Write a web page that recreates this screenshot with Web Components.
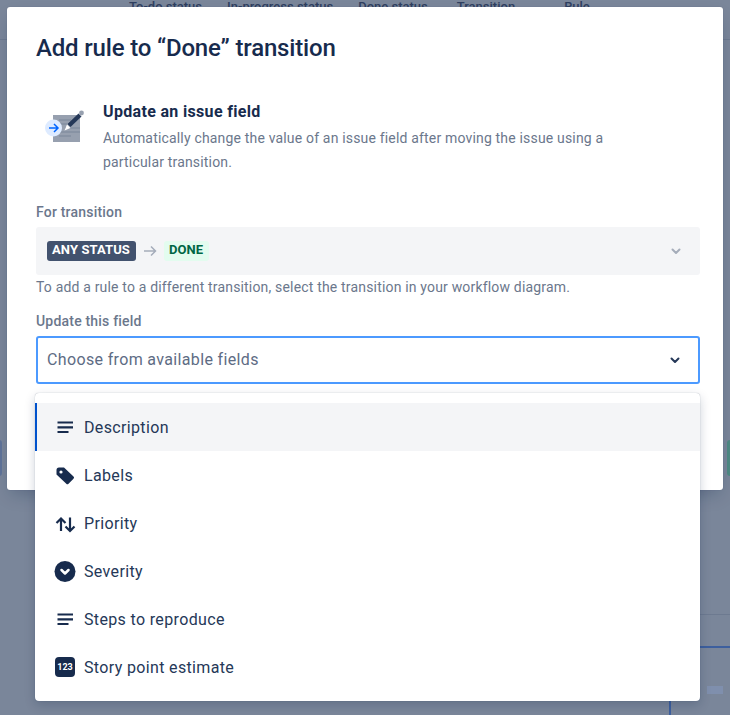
<!DOCTYPE html>
<html>
<head>
<meta charset="utf-8">
<title>Add rule</title>
<style>
  html, body { margin: 0; height: 100%; overflow: hidden; }
  body { font-family: Roboto, "Liberation Sans", sans-serif; color: #172B4D; background: #7A869A; }
</style>
</head>
<body>
<workflow-backdrop></workflow-backdrop>
<rule-modal heading="Add rule to “Done” transition">
  <rule-intro heading="Update an issue field">Automatically change the value of an issue field after moving the issue using a particular transition.</rule-intro>
  <transition-field></transition-field>
  <field-select placeholder="Choose from available fields">
    <field-option icon="lines" active>Description</field-option>
    <field-option icon="tag">Labels</field-option>
    <field-option icon="arrows">Priority</field-option>
    <field-option icon="chevron">Severity</field-option>
    <field-option icon="lines">Steps to reproduce</field-option>
    <field-option icon="number">Story point estimate</field-option>
  </field-select>
</rule-modal>

<script>
// the dimmed page behind the modal
class WorkflowBackdrop extends HTMLElement {
    constructor() {
        super();
        this.attachShadow({mode: 'open'});
        this.shadowRoot.innerHTML = `
            <style>
                :host { display: block; position: relative; height: 715px; overflow: hidden; background: #7A869A; }
                .head {
                    display: flex; height: 41px; padding-left: 129px; box-sizing: border-box;
                    border-bottom: 1px solid #6D7A90; font-size: 13px; line-height: 16px;
                    color: #2F3F60; font-weight: 500; margin-top: -1px;
                }
                .node { position: absolute; }
            </style>
            <div class="head">
                <span style="margin-right:25px">To-do status</span>
                <span style="margin-right:25px">In-progress status</span>
                <span style="margin-right:29px">Done status</span>
                <span style="margin-right:49px">Transition</span>
                <span>Rule</span>
            </div>
            <div class="node" style="left:-6px;top:440px;width:8px;height:36px;background:#5F7399;border-radius:3px"></div>
            <div class="node" style="left:727px;top:440px;width:8px;height:36px;background:#4E8A84;border-radius:3px"></div>
            <div class="node" style="left:700px;top:614px;width:30px;height:1px;background:#6D7A90"></div>
            <div class="node" style="left:700px;top:646px;width:30px;height:2px;background:#3D5F9E"></div>
            <div class="node" style="left:669px;top:700px;width:2px;height:15px;background:#3D5F9E"></div>
            <div class="node" style="left:707px;top:686px;width:16px;height:8px;background:#7F8FAD"></div>
        `;
    }
}

class RuleModal extends HTMLElement {
    constructor() {
        super();
        this.attachShadow({mode: 'open'});
        this.shadowRoot.innerHTML = `
            <style>
                :host {
                    display: block; position: absolute; top: 7px; left: 7px; width: 716px; height: 483px;
                    box-sizing: border-box; padding: 26px 23px 0 29px; background: #fff; border-radius: 3px;
                    box-shadow: 0 0 1px rgba(9,30,66,.3), 0 8px 16px -4px rgba(9,30,66,.25);
                }
                h1 { margin: 0 0 39px; font-size: 24px; line-height: 30px; font-weight: 500; letter-spacing: -.17px; color: #172B4D; }
            </style>
            <h1></h1>
            <slot></slot>
        `;
    }

    connectedCallback() {
        this.shadowRoot.querySelector('h1').textContent = this.getAttribute('heading');
    }
}

class RuleIntro extends HTMLElement {
    constructor() {
        super();
        this.attachShadow({mode: 'open'});
        this.shadowRoot.innerHTML = `
            <style>
                :host { display: flex; gap: 14px; padding-left: 9px; }
                svg { flex: none; width: 44px; height: 44px; margin-top: 8px; }
                h2 { margin: 0; font-size: 16px; line-height: 20px; font-weight: 700; letter-spacing: .33px; color: #172B4D; }
                p { margin: 4px 0 0; width: 530px; font-size: 14px; line-height: 24px; letter-spacing: .175px; color: #6B778C; }
            </style>
            <svg viewBox="0 0 44 44">
                <rect x="8" y="5" width="27" height="27" fill="#97A0AF"/>
                <path d="M14 10h12M14 14h8M20 18h15M14 22h21M14 26h12" stroke="#7A869A" stroke-width="1.2"/>
                <path d="M22.500 13.900L33.500 3.400l3 3.200L25.500 17.100z" fill="#253858"/>
                <circle cx="36.500" cy="3" r="2.400" fill="#97A0AF"/>
                <path d="M22 14.500l3.500 3.500-6 2.500z" fill="#fff"/>
                <circle cx="8.500" cy="18" r="8.500" fill="#DEEBFF"/>
                <path d="M4 18h8.500M9 14l4 4-4 4" fill="none" stroke="#0065FF" stroke-width="1.5"/>
            </svg>
            <div>
                <h2></h2>
                <p><slot></slot></p>
            </div>
        `;
    }

    connectedCallback() {
        this.shadowRoot.querySelector('h2').textContent = this.getAttribute('heading');
    }
}

class TransitionField extends HTMLElement {
    constructor() {
        super();
        this.attachShadow({mode: 'open'});
        this.shadowRoot.innerHTML = `
            <style>
                :host { display: block; margin-top: 30px; }
                label { display: block; font-size: 14px; line-height: 16px; font-weight: 500; letter-spacing: .2px; color: #6B778C; }
                .box {
                    display: flex; align-items: center; height: 48px; margin-top: 7px; padding: 0 16px 0 11px;
                    box-sizing: border-box; background: #F4F5F7; border-radius: 3px;
                }
                .loz {
                    font-size: 13px; line-height: 18px; font-weight: 700; padding: 0 6px 2px 5px;
                    border-radius: 3px; letter-spacing: .1px;
                }
                .any { background: #42526E; color: #fff; }
                .done { background: #E3FCEF; color: #006644; }
                .arrow { width: 13px; height: 12px; margin: 0 7px 0 8px; }
                .chev { margin-left: auto; width: 16px; height: 16px; }
                small { display: block; margin-top: 4px; font-size: 14px; line-height: 16px; color: #6B778C; letter-spacing: .175px; }
            </style>
            <label>For transition</label>
            <div class="box">
                <span class="loz any">ANY STATUS</span>
                <svg class="arrow" viewBox="0 0 13 12"><path d="M0 6h11.500M7 1.500L11.500 6 7 10.500" fill="none" stroke="#A5ADBA" stroke-width="1.5"/></svg>
                <span class="loz done">DONE</span>
                <svg class="chev" viewBox="0 0 16 16"><path d="M4.500 6.500L8 10l3.500-3.500" fill="none" stroke="#A5ADBA" stroke-width="2" stroke-linecap="round" stroke-linejoin="round"/></svg>
            </div>
            <small>To add a rule to a different transition, select the transition in your workflow diagram.</small>
        `;
    }
}

class FieldSelect extends HTMLElement {
    constructor() {
        super();
        this.attachShadow({mode: 'open'});
        this.shadowRoot.innerHTML = `
            <style>
                :host { display: block; position: relative; margin-top: 18px; }
                label { display: block; font-size: 14px; line-height: 16px; font-weight: 500; letter-spacing: .2px; color: #6B778C; }
                .control {
                    display: flex; align-items: center; justify-content: space-between; height: 48px; margin-top: 7px;
                    padding: 0 15px 2px 10px; box-sizing: border-box; border: 2px solid #4C9AFF; border-radius: 3px;
                    font-size: 16px; letter-spacing: .35px; color: #5E6C84; background: #fff;
                }
                .control span { margin-left: -1px; }
                svg { width: 16px; height: 16px; margin-top: 2px; }
                .menu {
                    position: absolute; top: 80px; left: -1px; right: 0; padding: 10px 0; background: #fff;
                    border-radius: 4px; box-shadow: 0 0 1px rgba(9,30,66,.4), 0 4px 11px rgba(9,30,66,.2);
                }
            </style>
            <label>Update this field</label>
            <div class="control">
                <span></span>
                <svg viewBox="0 0 16 16"><path d="M4.500 6.500L8 10l3.500-3.500" fill="none" stroke="#253858" stroke-width="2" stroke-linecap="round" stroke-linejoin="round"/></svg>
            </div>
            <div class="menu"><slot></slot></div>
        `;
    }

    connectedCallback() {
        this.shadowRoot.querySelector('.control span').textContent = this.getAttribute('placeholder');
    }
}

const FIELD_ICONS = {
    lines: '<path d="M2.500 5.500h15.500M2.500 10.300h15.500M2.500 15h11" fill="none" stroke="#172B4D" stroke-width="2.2"/>',
    tag: '<path d="M1.500 5a2.500 2.500 0 0 1 2.500-2.500h5l9.500 9a1.500 1.500 0 0 1 0 2.200l-5 5a1.500 1.500 0 0 1-2.200 0l-9.800-9.200z" fill="#172B4D"/><circle cx="6" cy="7" r="1.600" fill="#fff"/>',
    arrows: '<path d="M6 18V6M1.500 10L6 5.500l4.500 4.500M15 4.500v13M10.500 13.500l4.500 4.500 4.500-4.500" fill="none" stroke="#172B4D" stroke-width="2.2"/>',
    chevron: '<circle cx="10" cy="10.500" r="10.500" fill="#172B4D"/><path d="M6.500 9L10 12.500 13.500 9" fill="none" stroke="#fff" stroke-width="2.500" stroke-linecap="round" stroke-linejoin="round"/>',
};

class FieldOption extends HTMLElement {
    constructor() {
        super();
        this.attachShadow({mode: 'open'});
        this.shadowRoot.innerHTML = `
            <style>
                :host {
                    display: flex; align-items: center; height: 48px; box-sizing: border-box; padding-left: 20px;
                    font-size: 16px; letter-spacing: .35px; color: #253858;
                }
                :host([active]) { background: #F4F5F7; box-shadow: inset 2px 0 0 #0052CC; }
                .icon { flex: none; width: 20px; height: 21px; margin-right: 9px; display: flex; align-items: center; justify-content: center; }
                svg { width: 21px; height: 21px; flex: none; overflow: visible; }
                .num {
                    width: 20px; height: 20px; border-radius: 4px; background: #172B4D; color: #fff; text-align: center;
                    font-size: 9px; line-height: 20px; font-weight: 700; letter-spacing: 0;
                }
            </style>
            <span class="icon"></span>
            <slot></slot>
        `;
    }

    connectedCallback() {
        const name = this.getAttribute('icon');
        const icon = this.shadowRoot.querySelector('.icon');
        // the number icon has real digits in it, the others are drawn
        if(name === 'number') {
            icon.innerHTML = '<span class="num">123</span>';
        } else {
            icon.innerHTML = `<svg viewBox="0 0 21 21">${FIELD_ICONS[name]}</svg>`;
        }
    }
}

customElements.define('workflow-backdrop', WorkflowBackdrop);
customElements.define('rule-modal', RuleModal);
customElements.define('rule-intro', RuleIntro);
customElements.define('transition-field', TransitionField);
customElements.define('field-select', FieldSelect);
customElements.define('field-option', FieldOption);
</script>
</body>
</html>
